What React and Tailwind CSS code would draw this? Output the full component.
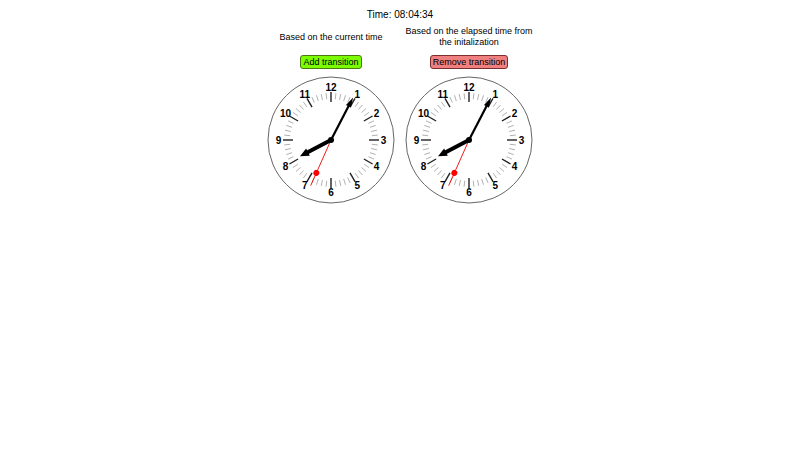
import React from "react";

const TIME = { h: 8, m: 4, s: 34 };

function Clock() {
  const hourAngle = ((TIME.h % 12) + TIME.m / 60 + TIME.s / 3600) * 30;
  const minuteAngle = (TIME.m + TIME.s / 60) * 6;
  const secondAngle = TIME.s * 6;

  const ticks = [];
  for (let i = 0; i < 60; i++) {
    const a = (i * 6 * Math.PI) / 180;
    const major = i % 5 === 0;
    const r1 = major ? 38 : 41;
    const r2 = major ? 48 : 47;
    ticks.push(
      <line
        key={i}
        x1={Math.sin(a) * r1}
        y1={-Math.cos(a) * r1}
        x2={Math.sin(a) * r2}
        y2={-Math.cos(a) * r2}
        stroke={major ? "#222" : "#a8a8a8"}
        strokeWidth={major ? 1.4 : 0.9}
      />
    );
  }

  const numbers = [];
  for (let n = 1; n <= 12; n++) {
    const a = (n * 30 * Math.PI) / 180;
    numbers.push(
      <text
        key={n}
        x={Math.sin(a) * 52.5}
        y={-Math.cos(a) * 52.5}
        textAnchor="middle"
        dominantBaseline="central"
        fontSize="10"
        fontWeight="bold"
        fontFamily="'Liberation Sans', Arial, sans-serif"
        fill="#000"
      >
        {n}
      </text>
    );
  }

  return (
    <svg width="130" height="130" viewBox="-65 -65 130 130">
      <circle cx="0" cy="0" r="63" fill="#fff" stroke="#666" strokeWidth="1" />
      {ticks}
      {numbers}
      {/* hour hand */}
      <g transform={`rotate(${hourAngle})`}>
        <line x1="0" y1="0" x2="0" y2="-28" stroke="#000" strokeWidth="4" />
        <polygon points="-4,-26 0,-35 4,-26" fill="#000" />
      </g>
      {/* minute hand */}
      <g transform={`rotate(${minuteAngle})`}>
        <line x1="0" y1="0" x2="0" y2="-40" stroke="#000" strokeWidth="2.2" />
        <polygon points="-2.8,-38 0,-48 2.8,-38" fill="#000" />
      </g>
      {/* second hand */}
      <g transform={`rotate(${secondAngle})`}>
        <line x1="0" y1="0" x2="0" y2="-50" stroke="#e00" strokeWidth="0.8" />
        <circle cx="0" cy="-36" r="3" fill="#f00" />
      </g>
      <circle cx="0" cy="0" r="3" fill="#000" />
    </svg>
  );
}

export default function App() {
  return (
    <div
      className="w-[800px] h-[450px] bg-white flex flex-col items-center text-black"
      style={{ fontFamily: "'Liberation Sans', Arial, sans-serif" }}
    >
      <div className="mt-[9px] text-[10px] leading-[12px]">Time: 08:04:34</div>
      <div className="flex mt-[5px]">
        <div className="w-[138px] flex flex-col items-center">
          <div className="h-[22px] flex items-center text-center text-[9px] leading-[11px]">
            Based on the current time
          </div>
          <button className="mt-[7px] h-[14px] px-[2px] rounded-[3px] border border-[#4a7a10] bg-[#7cfc00] text-[9px] leading-[12px]">
            Add transition
          </button>
          <div className="mt-[6px]">
            <Clock />
          </div>
        </div>
        <div className="w-[138px] flex flex-col items-center">
          <div className="h-[22px] w-[130px] flex items-center justify-center text-center text-[9px] leading-[11px]">
            Based on the elapsed time from the initalization
          </div>
          <button className="mt-[7px] h-[14px] px-[2px] rounded-[3px] border border-[#7a3030] bg-[#f08080] text-[9px] leading-[12px]">
            Remove transition
          </button>
          <div className="mt-[6px]">
            <Clock />
          </div>
        </div>
      </div>
    </div>
  );
}
